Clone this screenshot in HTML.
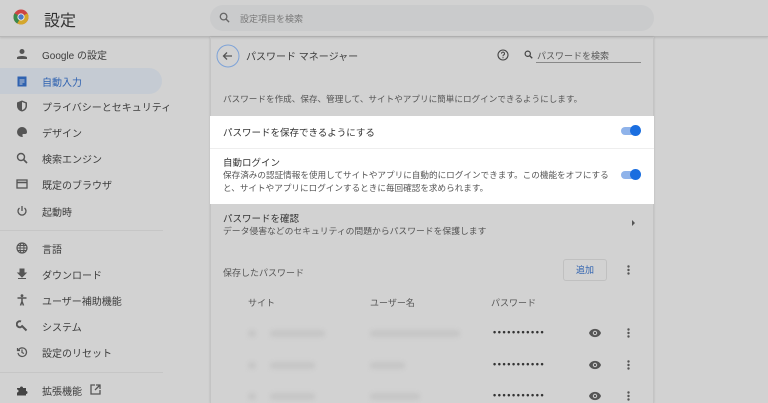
<!DOCTYPE html><html><head><meta charset="utf-8"><style>
*{margin:0;padding:0;box-sizing:border-box}
body{width:768px;height:403px;overflow:hidden;background:#d2d2d2;font-family:"Liberation Sans","Noto Sans CJK JP",sans-serif;color:#3a3a3a;position:relative}
.a{position:absolute;white-space:nowrap}
.hdr{position:absolute;left:0;top:0;width:768px;height:37px;border-bottom:1px solid #b8b8b8;box-shadow:0 1px 2px rgba(0,0,0,.12)}
.s{font-size:10px;color:#3c3c3c}
.card{position:absolute;left:210px;top:37px;width:444px;height:366px;border-left:1px solid #c4c4c4;border-right:1px solid #c4c4c4;box-shadow:0 0 2px rgba(0,0,0,.15)}
.blur{position:absolute;height:7px;background:#c6c6c6;filter:blur(2px);border-radius:3px}
.dots{font-size:9px;letter-spacing:1.6px;color:#333;font-weight:bold}
</style></head><body>
<div class="hdr"></div>
<svg class="a" style="left:13px;top:9px" width="16" height="16" viewBox="0 0 16 16"><circle cx="8" cy="8" r="7.5" fill="#c44"/><path d="M8 8 L14.5 4.3 A7.5 7.5 0 0 1 4.2 14.5Z" fill="#d4a72c"/><path d="M8 8 L4.2 14.5 A7.5 7.5 0 0 1 1.5 4.3Z" fill="#3a8a4a"/><circle cx="8" cy="8" r="3.6" fill="#eee"/><circle cx="8" cy="8" r="2.7" fill="#4a7ac8"/></svg>
<div class="a" style="left:44px;top:7px;font-size:16px;color:#333">設定</div>
<div class="a" style="left:210px;top:5px;width:444px;height:26px;border-radius:13px;background:#cacbcc"></div>
<svg class="a" style="left:219px;top:12px" width="11" height="11" viewBox="0 0 12 12"><circle cx="5" cy="5" r="3.6" fill="none" stroke="#666" stroke-width="1.4"/><path d="M7.6 7.6L11 11" stroke="#666" stroke-width="1.5"/></svg>
<div class="a" style="left:240px;top:12px;font-size:9px;color:#777">設定項目を検索</div>

<div class="a" style="left:0;top:68px;width:162px;height:26px;border-radius:0 13px 13px 0;background:#c5cbd3"></div>
<div class="a s" style="left:42px;top:47px">Google の設定</div>
<div class="a s" style="left:42px;top:74px;color:#2f62b0">自動入力</div>
<div class="a s" style="left:42px;top:99px">プライバシーとセキュリティ</div>
<div class="a s" style="left:42px;top:125px">デザイン</div>
<div class="a s" style="left:42px;top:151px">検索エンジン</div>
<div class="a s" style="left:42px;top:177px">既定のブラウザ</div>
<div class="a s" style="left:42px;top:204px">起動時</div>
<div class="a" style="left:0;top:230px;width:163px;border-top:1px solid #c6c6c6"></div>
<div class="a s" style="left:42px;top:241px">言語</div>
<div class="a s" style="left:42px;top:267px">ダウンロード</div>
<div class="a s" style="left:42px;top:293px">ユーザー補助機能</div>
<div class="a s" style="left:42px;top:319px">システム</div>
<div class="a s" style="left:42px;top:345px">設定のリセット</div>
<div class="a" style="left:0;top:372px;width:163px;border-top:1px solid #c6c6c6"></div>
<div class="a s" style="left:42px;top:383px">拡張機能</div>
<svg class="a" style="left:90px;top:384px" width="11" height="11" viewBox="0 0 11 11"><path d="M5 1H1v9h9V6M6 1h4v4M10 1L5 6" fill="none" stroke="#555" stroke-width="1.3"/></svg>
<svg class="a" style="left:16px;top:48px" width="12" height="12" viewBox="0 0 12 12"><circle cx="6" cy="3.5" r="2.5" fill="#555"/><path d="M1 11v-1.5C1 7.5 11 7.5 11 9.5V11Z" fill="#555"/></svg>
<svg class="a" style="left:16px;top:75px" width="12" height="12" viewBox="0 0 12 12"><rect x="1.5" y="1.5" width="9" height="10" fill="#2f62b0"/><path d="M3.5 5h5M3.5 7h5M3.5 9h3" stroke="#c5cbd3"/></svg>
<svg class="a" style="left:16px;top:100px" width="12" height="12" viewBox="0 0 12 12"><path d="M6 0.5L11 2.5V6c0 3-2.5 5-5 5.5C3.5 11 1 9 1 6V2.5Z" fill="#555"/><path d="M6 2v8c2-.5 3.5-2 3.5-4V3.4Z" fill="#d2d2d2"/></svg>
<svg class="a" style="left:16px;top:126px" width="12" height="12" viewBox="0 0 12 12"><path d="M6 1a5 5 0 0 0 0 10c1 0 1-1 .5-1.5S6.5 8 7.5 8H9a2 2 0 0 0 2-2C11 3.2 8.8 1 6 1Z" fill="#555"/></svg>
<svg class="a" style="left:16px;top:152px" width="12" height="12" viewBox="0 0 12 12"><circle cx="5" cy="5" r="3.5" fill="none" stroke="#555" stroke-width="1.4"/><path d="M7.5 7.5L11 11" stroke="#555" stroke-width="1.6"/></svg>
<svg class="a" style="left:16px;top:178px" width="12" height="12" viewBox="0 0 12 12"><rect x="1" y="2" width="10" height="8" fill="none" stroke="#555" stroke-width="1.3"/><path d="M1 4.5h10" stroke="#555" stroke-width="1.5"/></svg>
<svg class="a" style="left:16px;top:205px" width="12" height="12" viewBox="0 0 12 12"><path d="M3.5 3a4 4 0 1 0 5 0M6 1v5" fill="none" stroke="#555" stroke-width="1.3"/></svg>
<svg class="a" style="left:16px;top:242px" width="12" height="12" viewBox="0 0 12 12"><circle cx="6" cy="6" r="5" fill="none" stroke="#555" stroke-width="1.2"/><ellipse cx="6" cy="6" rx="2" ry="5" fill="none" stroke="#555"/><path d="M1 6h10M2 3.5h8M2 8.5h8" stroke="#555" stroke-width=".9"/></svg>
<svg class="a" style="left:16px;top:268px" width="12" height="12" viewBox="0 0 12 12"><path d="M4 1h4v4h2L6 9 2 5h2zM2 10.5h8" fill="#555" stroke="#555"/></svg>
<svg class="a" style="left:16px;top:294px" width="12" height="12" viewBox="0 0 12 12"><circle cx="6" cy="1.6" r="1.4" fill="#555"/><path d="M1.5 4h9M6 4v3.5M4.5 11.5l1.5-4 1.5 4" stroke="#555" stroke-width="1.5" fill="none"/></svg>
<svg class="a" style="left:16px;top:320px" width="12" height="12" viewBox="0 0 12 12"><path d="M10.5 10.5L5.5 5.5M5 1.5a3 3 0 1 0 1.5 4" stroke="#555" stroke-width="2" fill="none"/></svg>
<svg class="a" style="left:16px;top:346px" width="12" height="12" viewBox="0 0 12 12"><path d="M2.5 4A4.3 4.3 0 1 1 2 7M1.5 2v2.5H4M6 3.5v3l2 1" fill="none" stroke="#555" stroke-width="1.2"/></svg>
<svg class="a" style="left:16px;top:384px" width="12" height="12" viewBox="0 0 12 12"><path d="M1 4h3a1.5 1.5 0 1 1 3 0h3v3a1.5 1.5 0 1 1 0 3v1.5H1v-3a1.5 1.5 0 1 0 0-3Z" fill="#444"/></svg>

<div class="card"></div>
<svg class="a" style="left:216px;top:44px" width="24" height="24" viewBox="0 0 24 24"><circle cx="12" cy="12" r="11" fill="none" stroke="#7ea3d8" stroke-width="1"/><path d="M16 12H8M11 8.5L7.5 12 11 15.5" fill="none" stroke="#555" stroke-width="1.3"/></svg>
<div class="a s" style="left:246px;top:48px;font-size:10px">パスワード マネージャー</div>
<svg class="a" style="left:497px;top:49px" width="12" height="12" viewBox="0 0 12 12"><circle cx="6" cy="6" r="5" fill="none" stroke="#444" stroke-width="1.1"/><path d="M4.5 4.6a1.5 1.5 0 1 1 2 1.4c-.5.2-.5.6-.5 1.2" fill="none" stroke="#444"/><circle cx="6" cy="8.7" r=".6" fill="#444"/></svg>
<svg class="a" style="left:524px;top:50px" width="9" height="9" viewBox="0 0 12 12"><circle cx="5" cy="5" r="3.5" fill="none" stroke="#444" stroke-width="1.6"/><path d="M7.5 7.5L11 11" stroke="#444" stroke-width="1.8"/></svg>
<div class="a" style="left:537px;top:49px;font-size:9px;color:#555">パスワードを検索</div>
<div class="a" style="left:536px;top:62px;width:105px;border-top:1px solid #888"></div>
<div class="a" style="left:223px;top:93px;font-size:8.6px;color:#555">パスワードを作成、保存、管理して、サイトやアプリに簡単にログインできるようにします。</div>
<div class="a" style="left:210px;top:116px;width:444px;height:88px;background:#fff"></div>
<div class="a" style="left:210px;top:148px;width:444px;border-top:1px solid #eee"></div>
<div class="a" style="left:223px;top:125px;font-size:9.5px;color:#333">パスワードを保存できるようにする</div>
<div class="a" style="left:223px;top:155px;font-size:9.5px;color:#333">自動ログイン</div>
<div class="a" style="left:223px;top:169px;font-size:8.6px;color:#555;line-height:13px">保存済みの認証情報を使用してサイトやアプリに自動的にログインできます。この機能をオフにする<br>と、サイトやアプリにログインするときに毎回確認を求められます。</div>
<div class="a" style="left:621px;top:127px;width:18px;height:8px;border-radius:4px;background:#8fb3ea"></div>
<div class="a" style="left:630px;top:125px;width:11px;height:11px;border-radius:50%;background:#1a6ee0"></div>
<div class="a" style="left:621px;top:171px;width:18px;height:8px;border-radius:4px;background:#8fb3ea"></div>
<div class="a" style="left:630px;top:169px;width:11px;height:11px;border-radius:50%;background:#1a6ee0"></div>
<div class="a" style="left:223px;top:211px;font-size:9.5px;color:#333">パスワードを確認</div>
<div class="a" style="left:223px;top:224px;font-size:8.8px;color:#555">データ侵害などのセキュリティの問題からパスワードを保護します</div>
<div class="a" style="left:632px;top:220px;width:0;height:0;border-left:3px solid #555;border-top:3px solid transparent;border-bottom:3px solid transparent"></div>
<div class="a" style="left:223px;top:266px;font-size:9px;color:#555">保存したパスワード</div>
<div class="a" style="left:563px;top:259px;width:44px;height:22px;border:1px solid #c0c0c0;border-radius:3px;font-size:9px;color:#2f62b0;text-align:center;line-height:20px">追加</div>
<div class="a" style="left:248px;top:296px;font-size:9px;color:#555">サイト</div>
<div class="a" style="left:370px;top:296px;font-size:9px;color:#555">ユーザー名</div>
<div class="a" style="left:491px;top:296px;font-size:9px;color:#555">パスワード</div>
<div class="blur" style="left:248px;top:330px;width:8px"></div><div class="blur" style="left:270px;top:330px;width:55px"></div><div class="blur" style="left:370px;top:330px;width:90px"></div>
<div class="blur" style="left:248px;top:362px;width:8px"></div><div class="blur" style="left:270px;top:362px;width:45px"></div><div class="blur" style="left:370px;top:362px;width:35px"></div>
<div class="blur" style="left:248px;top:393px;width:8px"></div><div class="blur" style="left:270px;top:393px;width:45px"></div><div class="blur" style="left:370px;top:393px;width:50px"></div>
<div class="a dots" style="left:493px;top:327px">•••••••••••</div>
<div class="a dots" style="left:493px;top:359px">•••••••••••</div>
<div class="a dots" style="left:493px;top:390px">•••••••••••</div>
<svg width="0" height="0" style="position:absolute"><defs><g id="eye"><path d="M0 5C2-.5 10-.5 12 5 10 10.5 2 10.5 0 5Z" fill="#555"/><circle cx="6" cy="5" r="2.2" fill="#d2d2d2"/><circle cx="6" cy="5" r="1.2" fill="#555"/></g><g id="kb"><circle cx="1.5" cy="1.5" r="1.2" fill="#555"/><circle cx="1.5" cy="5" r="1.2" fill="#555"/><circle cx="1.5" cy="8.5" r="1.2" fill="#555"/></g></defs></svg>
<svg class="a" style="left:589px;top:328px" width="12" height="10"><use href="#eye"/></svg>
<svg class="a" style="left:589px;top:360px" width="12" height="10"><use href="#eye"/></svg>
<svg class="a" style="left:589px;top:391px" width="12" height="10"><use href="#eye"/></svg>
<svg class="a" style="left:627px;top:265px" width="3" height="10"><use href="#kb"/></svg>
<svg class="a" style="left:627px;top:328px" width="3" height="10"><use href="#kb"/></svg>
<svg class="a" style="left:627px;top:360px" width="3" height="10"><use href="#kb"/></svg>
<svg class="a" style="left:627px;top:391px" width="3" height="10"><use href="#kb"/></svg>
</body></html>
